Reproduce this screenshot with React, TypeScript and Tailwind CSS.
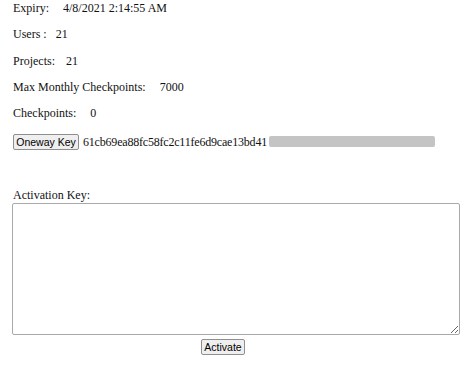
import React from "react";

const serif = { fontFamily: '"Liberation Serif", "Times New Roman", serif' };
const sans = { fontFamily: '"Liberation Sans", Arial, sans-serif' };

function Row({ label, value, gap }: { label: string; value: string; gap: number }) {
  return (
    <div className="h-[14px] leading-[14px] whitespace-pre">
      <span>{label}</span>
      <span style={{ marginLeft: gap }}>{value}</span>
    </div>
  );
}

export default function App() {
  return (
    <div className="w-[474px] h-[371px] bg-white text-[12px] text-[#111] overflow-hidden" style={serif}>
      <div className="pl-[13px] pt-[1px] flex flex-col gap-[12.3px]">
        <Row label="Expiry:" value="4/8/2021 2:14:55 AM" gap={14} />
        <Row label="Users :" value="21" gap={9} />
        <Row label="Projects:" value="21" gap={11} />
        <Row label="Max Monthly Checkpoints:" value="7000" gap={14} />
        <Row label="Checkpoints:" value="0" gap={14} />
      </div>
      <div className="pl-[13px] mt-[13px] flex items-center h-[17px]">
        <button
          className="h-[16px] w-[66px] border border-[#8f8f8f] rounded-[2px] bg-[#efefef] text-[10.5px] leading-[14px] text-black flex items-center justify-center"
          style={sans}
        >
          Oneway Key
        </button>
        <span className="ml-[4px] leading-[14px] tracking-[-0.2px]">61cb69ea88fc58fc2c11fe6d9cae13bd41</span>
        <span className="ml-[2px] w-[166px] h-[11px] bg-[#c4c4c4] rounded-[2px]" />
      </div>
      <div className="pl-[12px] pr-[14px] mt-[38px]">
        <div className="leading-[14px] pl-[1px]">Activation Key:</div>
        <textarea className="block mt-[1px] w-[448px] h-[132px] border border-[#a9a9a9] rounded-[2px] resize-y" />
        <div className="flex mt-[4px] pl-[189px]">
          <button
            className="h-[16px] w-[44px] border border-[#8f8f8f] rounded-[2px] bg-[#efefef] text-[10.5px] leading-[14px] text-black flex items-center justify-center"
            style={sans}
          >
            Activate
          </button>
        </div>
      </div>
    </div>
  );
}
